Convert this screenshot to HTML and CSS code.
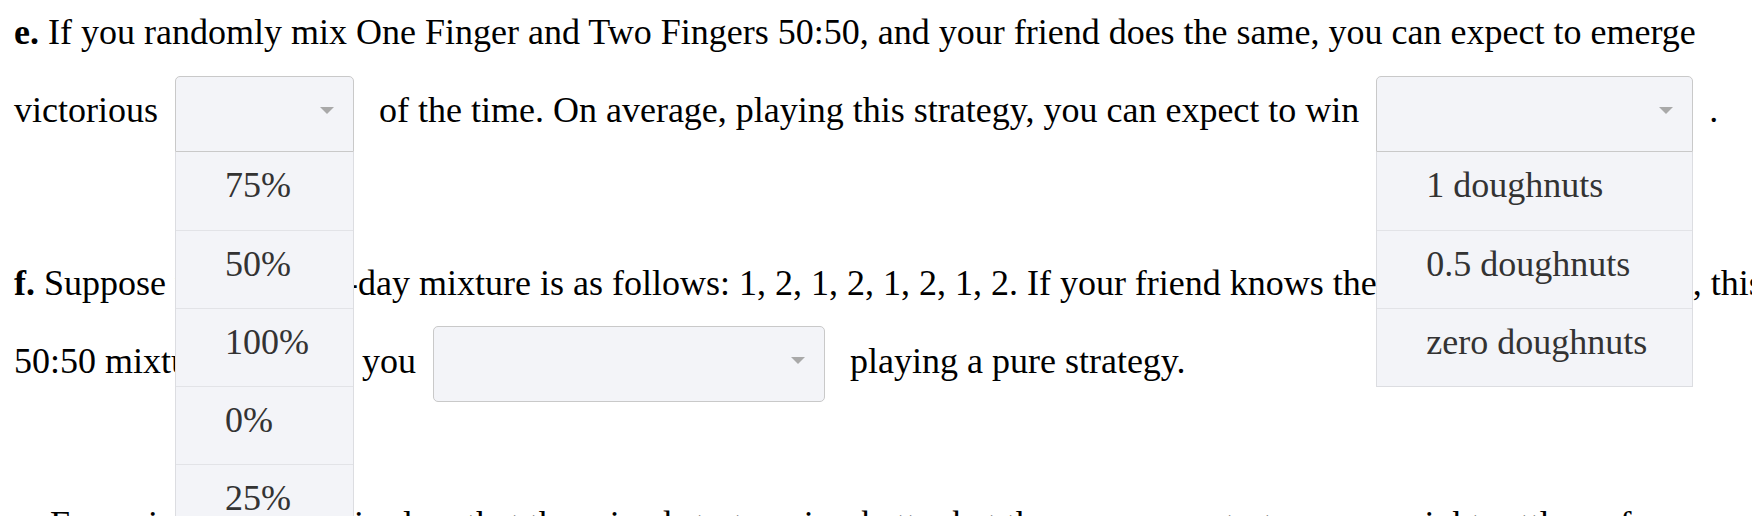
FILE: index.html
```html
<!DOCTYPE html>
<html lang="en">
<head>
<meta charset="utf-8">
<title>Mixed strategies</title>
<link rel="stylesheet" href="styles.css">
</head>
<body>
<div class="page">
  <p class="q"><b>e.</b> If you randomly mix One Finger and Two Fingers 50:50, and your friend does the same, you can expect to emerge victorious <span class="dd open w-pct"><span class="dd-box"><svg class="caret" viewBox="0 0 14 7"><polygon points="0,0 14,0 7,7"/></svg></span><span class="menu"><span class="opt">75%</span><span class="opt">50%</span><span class="opt">100%</span><span class="opt">0%</span><span class="opt">25%</span></span></span> of the time. On average, playing this strategy, you can expect to win <span class="dd open w-dough"><span class="dd-box"><svg class="caret" viewBox="0 0 14 7"><polygon points="0,0 14,0 7,7"/></svg></span><span class="menu"><span class="opt">1 doughnuts</span><span class="opt">0.5 doughnuts</span><span class="opt">zero doughnuts</span></span></span>.</p>
  <p class="q"><b>f.</b> Suppose your twelve-day mixture is as follows: 1, 2, 1, 2, 1, 2, 1, 2. If your friend knows the order of your choices, this 50:50 mixture will help you <span class="dd w-long"><span class="dd-box"><svg class="caret" viewBox="0 0 14 7"><polygon points="0,0 14,0 7,7"/></svg></span></span> playing a pure strategy.</p>
  <p class="q q-next"><b>g.</b> For a single game, it is clear that the mixed strategy is a better bet than any pure strategy you might settle on for yourself. Which</p>
</div>
</body>
</html>
```

FILE: styles.css
```css
html, body {
  margin: 0;
  padding: 0;
  overflow: hidden;
  background: #ffffff;
}

body {
  font-family: "Liberation Serif", "Times New Roman", serif;
  font-size: 36px;
  color: #000000;
}

.page {
  width: 1800px;
  padding-left: 14px;
}

.q {
  margin: 0;
  line-height: 78px;
}

.q:first-child {
  margin-top: -7px;
}

.q + .q {
  margin-top: 92px;
}

.q.q-next {
  margin-top: 83px;
}

.dd {
  display: inline-block;
  position: relative;
  vertical-align: middle;
  height: 76px;
  margin: 0 16px 0 8px;
}

.w-pct { width: 179px; }
.w-dough { width: 317px; }
.w-long { width: 392px; }

.dd-box {
  display: block;
  position: relative;
  box-sizing: border-box;
  height: 76px;
  border: 1px solid #c9c9c9;
  border-radius: 5px;
  background: #f3f4f8;
}

.dd.open .dd-box {
  border-radius: 5px 5px 0 0;
}

.caret {
  position: absolute;
  right: 19px;
  top: 30px;
  width: 14px;
  height: 7px;
  fill: #a9a9a9;
}

.menu {
  position: absolute;
  left: 0;
  right: 0;
  top: 76px;
  z-index: 2;
  display: block;
  background: #f3f4f8;
  border: 1px solid #dcdde1;
  border-top: 0;
  color: #333333;
  line-height: 40px;
}

.opt {
  display: block;
  box-sizing: border-box;
  height: 78px;
  padding: 13px 0 0 49px;
  border-top: 1px solid #e2e3e7;
  white-space: nowrap;
}

.opt:first-child {
  border-top: 0;
}
```
